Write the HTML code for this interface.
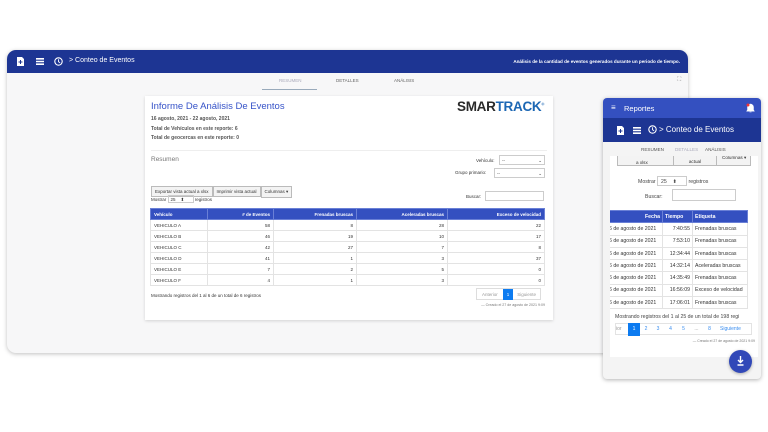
<!DOCTYPE html>
<html><head><meta charset="utf-8"><style>
*{box-sizing:border-box;margin:0;padding:0}
body{width:768px;height:432px;background:#fff;font-family:"Liberation Sans",sans-serif;position:relative;overflow:hidden;color:#333}
.a{position:absolute}
.win{left:7px;top:50px;width:681px;height:303px;background:#f7f7f8;border-radius:9px;box-shadow:0 1px 4px rgba(0,0,0,.25);overflow:hidden}
.hdr{left:0;top:0;width:681px;height:23px;background:#1d3593;color:#fff}
.card{left:145px;top:96px;width:408px;height:224px;background:#fff;box-shadow:0 1px 3px rgba(0,0,0,.15)}
table{border-collapse:collapse;font-size:4.5px}
td,th{border:1px solid #e3e3e3;padding:0 3px;height:11px;text-align:right;white-space:nowrap}
th{background:#3450c0;color:#fff;border-color:#6a80d6;font-weight:bold}
td:first-child,th:first-child{text-align:left}
.btn{border:1px solid #bbb;background:#f3f3f3;font-size:4.5px;padding:2px 3px;display:inline-block}
.phone{left:603px;top:98px;width:158px;height:281px;background:#f4f4f4;border-radius:4px;box-shadow:0 1px 4px rgba(0,0,0,.3);overflow:hidden}
.pt td,.pt th{height:12.3px;font-size:5.2px;padding:0 2px}
</style></head><body>
<div class="a win">
 <div class="a hdr">
  <svg class="a" style="left:10px;top:7px" width="7" height="9"><path d="M0 0h5l2 2v7H0z" fill="#fff"/><path d="M3.5 3v4M1.5 5h4" stroke="#1d3593" stroke-width="1"/></svg>
  <svg class="a" style="left:29px;top:8px" width="8" height="7"><path d="M0 0h8v1.6H0zM0 2.7h8v1.6H0zM0 5.4h8V7H0z" fill="#fff"/></svg>
  <svg class="a" style="left:47px;top:7px" width="9" height="9"><circle cx="4.5" cy="4.5" r="3.7" fill="none" stroke="#fff" stroke-width="1.1"/><path d="M4.5 2.3v2.4l1.6 1" stroke="#fff" fill="none" stroke-width=".9"/></svg>
  <div class="a" style="left:62px;top:7px;font-size:7px">&gt; Conteo de Eventos</div>
  <div class="a" style="right:8px;top:9px;font-size:4.6px;font-weight:bold">Análisis de la cantidad de eventos generados durante un periodo de tiempo.</div>
 </div>
 <div class="a" style="left:272px;top:28px;font-size:4.5px;color:#aab">RESUMEN</div>
 <div class="a" style="left:255px;top:39px;width:55px;height:1px;background:#9ab"></div>
 <div class="a" style="left:329px;top:28px;font-size:4.5px;color:#666">DETALLES</div>
 <div class="a" style="left:387px;top:28px;font-size:4.5px;color:#666">ANÁLISIS</div>
 <div class="a" style="left:670px;top:27px;font-size:6px;color:#999">⛶</div>
</div>
<div class="a card">
 <div class="a" style="left:6px;top:5px;font-size:9.5px;color:#3552c8">Informe De Análisis De Eventos</div>
 <div class="a" style="left:6px;top:19px;font-size:5px;font-weight:bold;color:#555;line-height:9.5px">16 agosto, 2021 - 22 agosto, 2021<br>Total de Vehículos en este reporte: 6<br>Total de geocercas en este reporte: 0</div>
 <div class="a" style="right:9px;top:3px;font-size:13.5px;font-weight:bold;letter-spacing:-.3px;color:#2a2a2a">SMAR<span style="color:#1c67b4">TRACK</span><sup style="font-size:4px;color:#1c67b4">®</sup></div>
 <div class="a" style="left:6px;top:54px;width:396px;height:1px;background:#eee"></div>
 <div class="a" style="left:6px;top:60px;font-size:6.5px;color:#777">Resumen</div>
 <div class="a" style="left:331px;top:62px;font-size:4.5px">Vehículo:</div>
 <div class="a" style="left:354px;top:59px;width:46px;height:10px;border:1px solid #ccc;font-size:4.5px;padding:2px">--<span style="float:right">⌄</span></div>
 <div class="a" style="left:310px;top:74px;font-size:4.5px">Grupo primario:</div>
 <div class="a" style="left:349px;top:72px;width:51px;height:10px;border:1px solid #ccc;font-size:4.5px;padding:2px">--<span style="float:right">⌄</span></div>
 <div class="a" style="left:6px;top:84px"><span class="btn">Exportar vista actual a xlsx</span><span class="btn">Imprimir vista actual</span><span class="btn">Columnas ▾</span></div>
 <div class="a" style="left:6px;top:99px;font-size:4.5px">Mostrar <span style="display:inline-block;border:1px solid #ccc;width:26px;height:8px;padding:1px 2px">25 &nbsp;&nbsp;&nbsp;⬍</span> registros</div>
 <div class="a" style="left:321px;top:98px;font-size:4.5px">Buscar:</div>
 <div class="a" style="left:340px;top:95px;width:59px;height:10px;border:1px solid #ccc"></div>
 <table class="a" style="left:5px;top:112px;width:395px">
  <tr><th style="width:57px">Vehículo</th><th style="width:66px"># de Eventos</th><th style="width:83px">Frenadas bruscas</th><th style="width:91px">Aceleradas bruscas</th><th>Exceso de velocidad</th></tr>
  <tr><td>VEHICULO A</td><td>58</td><td>8</td><td>28</td><td>22</td></tr>
  <tr><td>VEHICULO B</td><td>46</td><td>19</td><td>10</td><td>17</td></tr>
  <tr><td>VEHICULO C</td><td>42</td><td>27</td><td>7</td><td>8</td></tr>
  <tr><td>VEHICULO D</td><td>41</td><td>1</td><td>3</td><td>37</td></tr>
  <tr><td>VEHICULO E</td><td>7</td><td>2</td><td>5</td><td>0</td></tr>
  <tr><td>VEHICULO F</td><td>4</td><td>1</td><td>3</td><td>0</td></tr>
 </table>
 <div class="a" style="left:6px;top:197px;font-size:4.5px">Mostrando registros del 1 al 6 de un total de 6 registros</div>
 <div class="a" style="left:331px;top:192px;height:12px;border:1px solid #ddd;font-size:4.5px;color:#999;display:flex;align-items:center"><span style="padding:0 5px">Anterior</span><span style="background:#0d7bf0;color:#fff;padding:3px 4px">1</span><span style="padding:0 4px">Siguiente</span></div>
 <div class="a" style="right:8px;top:207px;font-size:3.6px;color:#777">— Creado el 27 de agosto de 2021 9:09</div>
</div>
<div class="a phone">
 <div class="a" style="left:0;top:0;width:158px;height:20px;background:#3450c0;color:#fff">
  <div class="a" style="left:8px;top:5px;font-size:8px">≡</div>
  <div class="a" style="left:21px;top:6px;font-size:7.5px">Reportes</div>
  <svg class="a" style="left:143px;top:5px" width="9" height="10"><path d="M4.5 1a3 3 0 0 0-3 3v3l-1 1.2h8L7.5 7V4a3 3 0 0 0-3-3zM3.5 9h2" fill="#fff" stroke="#fff" stroke-width=".5"/><circle cx="2" cy="2" r="1.5" fill="#e33"/></svg>
 </div>
 <div class="a" style="left:0;top:20px;width:158px;height:24px;background:#1d3593;color:#fff">
  <svg class="a" style="left:14px;top:8px" width="7" height="9"><path d="M0 0h5l2 2v7H0z" fill="#fff"/><path d="M3.5 3v4M1.5 5h4" stroke="#1d3593" stroke-width="1"/></svg>
  <svg class="a" style="left:30px;top:9px" width="8" height="7"><path d="M0 0h8v1.6H0zM0 2.7h8v1.6H0zM0 5.4h8V7H0z" fill="#fff"/></svg>
  <svg class="a" style="left:45px;top:7px" width="9" height="9"><circle cx="4.5" cy="4.5" r="3.7" fill="none" stroke="#fff" stroke-width="1.1"/><path d="M4.5 2.3v2.4l1.6 1" stroke="#fff" fill="none" stroke-width=".9"/></svg>
  <div class="a" style="left:56px;top:7px;font-size:8px">&gt; Conteo de Eventos</div>
 </div>
 <div class="a" style="left:38px;top:49px;font-size:4.6px;color:#555">RESUMEN</div>
 <div class="a" style="left:72px;top:49px;font-size:4.6px;color:#aab">DETALLES</div>
 <div class="a" style="left:102px;top:49px;font-size:4.6px;color:#555">ANÁLISIS</div>
 <div class="a" style="left:7px;top:58px;width:148px;height:201px;background:#fff;overflow:hidden">
  <div class="a" style="left:7px;top:0;width:134px;height:10px;border:1px solid #bbb;border-top:0;background:#f3f3f3;font-size:4.6px">
   <span class="a" style="left:18px;top:4px">a xlsx</span><span class="a" style="left:55px;top:-1px;width:44px;height:10px;border-left:1px solid #bbb;border-right:1px solid #bbb;text-align:center;padding-top:4px">actual</span><span class="a" style="left:104px;top:-1px">Columnas ▾</span>
  </div>
  <div class="a" style="left:28px;top:20px;font-size:5.2px;color:#444">Mostrar <span style="display:inline-block;border:1px solid #ccc;width:30px;height:10px;padding:2px 3px">25 &nbsp;&nbsp;&nbsp;⬍</span> registros</div>
  <div class="a" style="left:35px;top:38px;font-size:5.2px;color:#444">Buscar:</div>
  <div class="a" style="left:62px;top:33px;width:64px;height:12px;border:1px solid #ccc"></div>
  <table class="a pt" style="left:-4px;top:54px;width:142px;table-layout:fixed">
   <tr><th style="width:56px;text-align:right">Fecha</th><th style="width:30px;text-align:left">Tiempo</th><th style="text-align:left">Etiqueta</th></tr>
   <tr><td>6 de agosto de 2021</td><td>7:40:55</td><td style="text-align:left">Frenadas bruscas</td></tr>
   <tr><td>6 de agosto de 2021</td><td>7:53:10</td><td style="text-align:left">Frenadas bruscas</td></tr>
   <tr><td>6 de agosto de 2021</td><td>12:34:44</td><td style="text-align:left">Frenadas bruscas</td></tr>
   <tr><td>6 de agosto de 2021</td><td>14:32:14</td><td style="text-align:left">Aceleradas bruscas</td></tr>
   <tr><td>6 de agosto de 2021</td><td>14:35:49</td><td style="text-align:left">Frenadas bruscas</td></tr>
   <tr><td>6 de agosto de 2021</td><td>16:56:09</td><td style="text-align:left">Exceso de velocidad</td></tr>
   <tr><td>6 de agosto de 2021</td><td>17:06:01</td><td style="text-align:left">Frenadas bruscas</td></tr>
  </table>
  <div class="a" style="left:5px;top:158px;font-size:5.2px;color:#444;white-space:nowrap">Mostrando registros del 1 al 25 de un total de 198 regi</div>
  <div class="a" style="left:5px;top:167px;width:137px;height:12px;border:1px solid #e3e3e3;font-size:5px;color:#3a8ef0;display:flex;align-items:center">
   <span style="color:#999;width:12px">ior</span><span style="background:#0d7bf0;color:#fff;width:12px;height:13px;text-align:center;padding-top:3px">1</span><span style="width:12px;text-align:center">2</span><span style="width:12px;text-align:center">3</span><span style="width:13px;text-align:center">4</span><span style="width:13px;text-align:center">5</span><span style="width:13px;text-align:center;color:#999">...</span><span style="width:13px;text-align:center">8</span><span style="padding-left:4px">Siguiente</span></div>
  <div class="a" style="right:3px;top:183px;font-size:3.5px;color:#777">— Creado el 27 de agosto de 2021 9:09</div>
 </div>
 <div class="a" style="left:126px;top:252px;width:23px;height:23px;border-radius:50%;background:#3148b8;box-shadow:0 1px 3px rgba(0,0,0,.3)">
  <svg class="a" style="left:7px;top:6px" width="9" height="11"><path d="M4.5 0v6M2 4l2.5 2.5L7 4M1.5 9h6" stroke="#fff" stroke-width="1.4" fill="none"/></svg>
 </div>
</div>
</body></html>
